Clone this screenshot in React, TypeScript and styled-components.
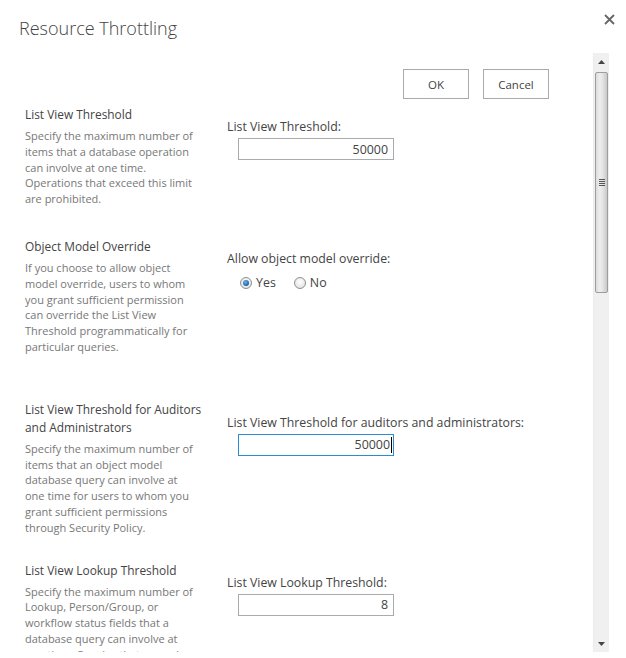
import React from "react";
import styled, { createGlobalStyle } from "styled-components";

const GlobalStyle = createGlobalStyle`
  html, body {
    margin: 0;
    padding: 0;
    background: #fff;
  }
  body {
    font-family: "Open Sans", "Noto Sans", "Liberation Sans", sans-serif;
    color: #444;
  }
`;

type Section = {
  title: string;
  description: string;
  label: string;
  gap: number;
  labelOffset: number;
  control: "input" | "radio";
  value?: string;
  focused?: boolean;
};

const sections: Section[] = [
  {
    title: "List View Threshold",
    description:
      "Specify the maximum number of items that a database operation can involve at one time. Operations that exceed this limit are prohibited.",
    label: "List View Threshold:",
    gap: 6,
    labelOffset: 13,
    control: "input",
    value: "50000",
  },
  {
    title: "Object Model Override",
    description:
      "If you choose to allow object model override, users to whom you grant sufficient permission can override the List View Threshold programmatically for particular queries.",
    label: "Allow object model override:",
    gap: 30,
    labelOffset: 13,
    control: "radio",
  },
  {
    title: "List View Threshold for Auditors and Administrators",
    description:
      "Specify the maximum number of items that an object model database query can involve at one time for users to whom you grant sufficient permissions through Security Policy.",
    label: "List View Threshold for auditors and administrators:",
    gap: 45,
    labelOffset: 14,
    control: "input",
    value: "50000",
    focused: true,
  },
  {
    title: "List View Lookup Threshold",
    description:
      "Specify the maximum number of Lookup, Person/Group, or workflow status fields that a database query can involve at one time. Queries that exceed this limit are prohibited.",
    label: "List View Lookup Threshold:",
    gap: 25,
    labelOffset: 13,
    control: "input",
    value: "8",
  },
];

const App: React.FC = () => {
  return (
    <Dialog>
      <GlobalStyle />
      <Header>
        <Title>Resource Throttling</Title>
        <CloseButton aria-label="Close">
          <svg width="11" height="11" viewBox="0 0 11 11">
            <path d="M1 1 L10 10 M10 1 L1 10" stroke="#666" strokeWidth="1.8" />
          </svg>
        </CloseButton>
      </Header>
      <Body>
        <Content>
          <ButtonRow>
            <Button>OK</Button>
            <Button>Cancel</Button>
          </ButtonRow>
          {sections.map((s) => (
            <Row key={s.title} gap={s.gap}>
              <Info>
                <SectionTitle>{s.title}</SectionTitle>
                <Description>{s.description}</Description>
              </Info>
              <Field offset={s.labelOffset}>
                <FieldLabel>{s.label}</FieldLabel>
                {s.control === "input" ? (
                  <TextBox focused={s.focused}>
                    {s.value}
                    {s.focused && <Caret />}
                  </TextBox>
                ) : (
                  <RadioGroup>
                    <RadioOption>
                      <Radio checked />
                      Yes
                    </RadioOption>
                    <RadioOption>
                      <Radio />
                      No
                    </RadioOption>
                  </RadioGroup>
                )}
              </Field>
            </Row>
          ))}
        </Content>
        <ScrollBar>
          <ScrollArrow>
            <svg width="7" height="4" viewBox="0 0 7 4">
              <path d="M3.5 0 L7 4 L0 4 Z" fill="#444" />
            </svg>
          </ScrollArrow>
          <Thumb>
            <Grip>
              <span />
              <span />
              <span />
              <span />
            </Grip>
          </Thumb>
          <Track />
          <ScrollArrow>
            <svg width="7" height="4" viewBox="0 0 7 4">
              <path d="M0 0 L7 0 L3.5 4 Z" fill="#444" />
            </svg>
          </ScrollArrow>
        </ScrollBar>
      </Body>
    </Dialog>
  );
};

export default App;

const Dialog = styled.div`
  width: 626px;
  height: 658px;
  display: flex;
  flex-direction: column;
  overflow: hidden;
`;

const Header = styled.div`
  height: 53px;
  display: flex;
  align-items: flex-start;
  justify-content: space-between;
  flex-shrink: 0;
`;

const Title = styled.h1`
  margin: 15px 0 0 19px;
  font-size: 18px;
  font-weight: 300;
  line-height: 26px;
  color: #444;
`;

const CloseButton = styled.div`
  margin: 14px 11px 0 0;
  width: 11px;
  height: 11px;
  display: flex;
`;

const Body = styled.div`
  height: 599px;
  display: flex;
  flex-shrink: 0;
`;

const Content = styled.div`
  flex: 1;
  overflow: hidden;
  padding: 16px 44px 0 25px;
`;

const ButtonRow = styled.div`
  display: flex;
  justify-content: flex-end;
  gap: 14px;
`;

const Button = styled.div`
  box-sizing: border-box;
  width: 66px;
  height: 30px;
  border: 1px solid #ababab;
  display: flex;
  align-items: center;
  justify-content: center;
  font-size: 11.5px;
  color: #444;
`;

const Row = styled.div<{ gap: number }>`
  display: grid;
  grid-template-columns: 202px 1fr;
  margin-top: ${(p) => p.gap}px;
`;

const Info = styled.div`
  width: 190px;
`;

const SectionTitle = styled.div`
  font-size: 11.9px;
  line-height: 18px;
  color: #444;
`;

const Description = styled.div`
  margin-top: 5px;
  width: 174px;
  font-size: 11px;
  line-height: 15.8px;
  color: #777;
`;

const Field = styled.div<{ offset: number }>`
  padding-top: ${(p) => p.offset}px;
`;

const FieldLabel = styled.div`
  font-size: 12.3px;
  line-height: 18px;
  color: #444;
`;

const TextBox = styled.div<{ focused?: boolean }>`
  box-sizing: border-box;
  margin: 2px 0 0 11px;
  width: 156px;
  height: 22px;
  border: 1px solid ${(p) => (p.focused ? "#2a8dd4" : "#ababab")};
  display: flex;
  align-items: center;
  justify-content: flex-end;
  padding-right: ${(p) => (p.focused ? "1px" : "5px")};
  font-size: 12.4px;
  color: #444;
`;

const Caret = styled.span`
  width: 1px;
  height: 16px;
  background: #000;
  margin-left: 1px;
`;

const RadioGroup = styled.div`
  display: flex;
  gap: 18px;
  margin: 7px 0 0 13px;
`;

const RadioOption = styled.div`
  display: flex;
  align-items: center;
  gap: 4px;
  font-size: 12.4px;
  line-height: 16px;
  color: #444;
`;

const Radio = styled.span<{ checked?: boolean }>`
  box-sizing: border-box;
  width: 12px;
  height: 12px;
  border-radius: 50%;
  border: 1px solid #8f8f8f;
  background: radial-gradient(circle at 50% 40%, #ffffff 0%, #e6e6e6 70%, #d2d2d2 100%);
  display: flex;
  align-items: center;
  justify-content: center;
  &::after {
    content: "";
    display: ${(p) => (p.checked ? "block" : "none")};
    width: 6px;
    height: 6px;
    border-radius: 50%;
    background: radial-gradient(circle at 40% 35%, #6fb3e8 0%, #1f6fb5 60%, #0e3f72 100%);
  }
`;

const ScrollBar = styled.div`
  width: 16px;
  margin-right: 17px;
  display: flex;
  flex-direction: column;
  background: #f0f0f0;
  border-left: 1px solid #ececec;
  box-sizing: border-box;
`;

const ScrollArrow = styled.div`
  height: 17px;
  display: flex;
  align-items: center;
  justify-content: center;
  flex-shrink: 0;
`;

const Thumb = styled.div`
  box-sizing: border-box;
  margin: 2px 1px 0 1px;
  height: 221px;
  border: 1px solid #9d9d9d;
  border-radius: 2px;
  background: linear-gradient(to right, #dcdcdc 0%, #eeeeee 35%, #e4e4e4 60%, #c9c9c9 100%);
  display: flex;
  align-items: center;
  justify-content: center;
  flex-shrink: 0;
`;

const Grip = styled.div`
  display: flex;
  flex-direction: column;
  gap: 1px;
  > span {
    display: block;
    width: 6px;
    height: 1px;
    background: #555;
  }
`;

const Track = styled.div`
  flex: 1;
`;
